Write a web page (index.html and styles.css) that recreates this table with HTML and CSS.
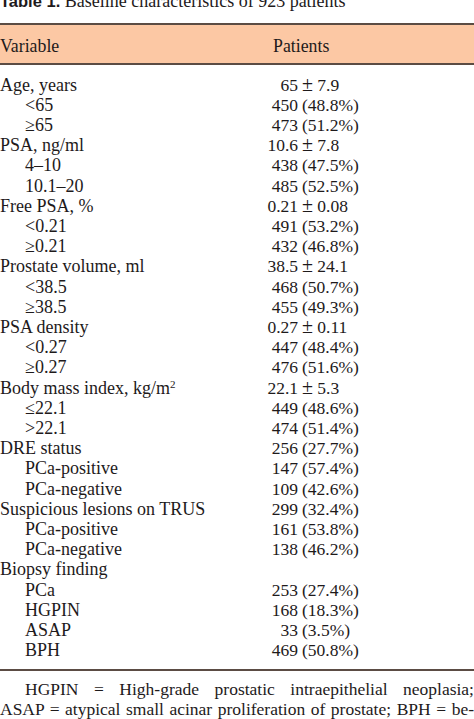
FILE: index.html
```html
<!DOCTYPE html>
<html>
<head>
<meta charset="utf-8">
<link rel="stylesheet" href="styles.css">
</head>
<body>
<div class="title"><span class="tlabel">Table 1.</span> Baseline characteristics of 923 patients</div>
<div class="table">
  <div class="head">
    <div>Variable</div>
    <div>Patients</div>
  </div>
  <div class="body">
    <div class="row"><div class="lab">Age, years</div><div class="a">65</div><div class="b pm"><span class="pmg">±</span> 7.9</div></div>
    <div class="row"><div class="lab sub">&lt;65</div><div class="a">450</div><div class="b">(48.8%)</div></div>
    <div class="row"><div class="lab sub">≥65</div><div class="a">473</div><div class="b">(51.2%)</div></div>
    <div class="row"><div class="lab">PSA, ng/ml</div><div class="a">10.6</div><div class="b pm"><span class="pmg">±</span> 7.8</div></div>
    <div class="row"><div class="lab sub">4–10</div><div class="a">438</div><div class="b">(47.5%)</div></div>
    <div class="row"><div class="lab sub">10.1–20</div><div class="a">485</div><div class="b">(52.5%)</div></div>
    <div class="row"><div class="lab">Free PSA, %</div><div class="a">0.21</div><div class="b pm"><span class="pmg">±</span> 0.08</div></div>
    <div class="row"><div class="lab sub">&lt;0.21</div><div class="a">491</div><div class="b">(53.2%)</div></div>
    <div class="row"><div class="lab sub">≥0.21</div><div class="a">432</div><div class="b">(46.8%)</div></div>
    <div class="row"><div class="lab">Prostate volume, ml</div><div class="a">38.5</div><div class="b pm"><span class="pmg">±</span> 24.1</div></div>
    <div class="row"><div class="lab sub">&lt;38.5</div><div class="a">468</div><div class="b">(50.7%)</div></div>
    <div class="row"><div class="lab sub">≥38.5</div><div class="a">455</div><div class="b">(49.3%)</div></div>
    <div class="row"><div class="lab">PSA density</div><div class="a">0.27</div><div class="b pm"><span class="pmg">±</span> 0.11</div></div>
    <div class="row"><div class="lab sub">&lt;0.27</div><div class="a">447</div><div class="b">(48.4%)</div></div>
    <div class="row"><div class="lab sub">≥0.27</div><div class="a">476</div><div class="b">(51.6%)</div></div>
    <div class="row"><div class="lab">Body mass index, kg/m<span class="sup">2</span></div><div class="a">22.1</div><div class="b pm"><span class="pmg">±</span> 5.3</div></div>
    <div class="row"><div class="lab sub">≤22.1</div><div class="a">449</div><div class="b">(48.6%)</div></div>
    <div class="row"><div class="lab sub">&gt;22.1</div><div class="a">474</div><div class="b">(51.4%)</div></div>
    <div class="row"><div class="lab">DRE status</div><div class="a">256</div><div class="b">(27.7%)</div></div>
    <div class="row"><div class="lab sub">PCa-positive</div><div class="a">147</div><div class="b">(57.4%)</div></div>
    <div class="row"><div class="lab sub">PCa-negative</div><div class="a">109</div><div class="b">(42.6%)</div></div>
    <div class="row"><div class="lab">Suspicious lesions on TRUS</div><div class="a">299</div><div class="b">(32.4%)</div></div>
    <div class="row"><div class="lab sub">PCa-positive</div><div class="a">161</div><div class="b">(53.8%)</div></div>
    <div class="row"><div class="lab sub">PCa-negative</div><div class="a">138</div><div class="b">(46.2%)</div></div>
    <div class="row"><div class="lab">Biopsy finding</div><div class="a"></div><div class="b"></div></div>
    <div class="row"><div class="lab sub">PCa</div><div class="a">253</div><div class="b">(27.4%)</div></div>
    <div class="row"><div class="lab sub">HGPIN</div><div class="a">168</div><div class="b">(18.3%)</div></div>
    <div class="row"><div class="lab sub">ASAP</div><div class="a">33</div><div class="b">(3.5%)</div></div>
    <div class="row"><div class="lab sub">BPH</div><div class="a">469</div><div class="b">(50.8%)</div></div>
  </div>
</div>
<div class="note">
  <div class="line first">HGPIN = High-grade prostatic intraepithelial neoplasia;</div>
  <div class="line">ASAP = atypical small acinar proliferation of prostate; BPH = be-</div>
  <div class="line">nign prostatic hyperplasia.</div>
</div>
</body>
</html>
```

FILE: styles.css
```css
html, body {
  margin: 0;
  padding: 0;
  background: #ffffff;
}
body {
  width: 474px;
  overflow: hidden;
  font-family: "Liberation Serif", "Times New Roman", serif;
  font-size: 17.5px;
  color: #1e1a1b;
}
.title {
  margin-top: -9px;
  height: 20px;
  line-height: 20px;
  font-size: 18px;
  white-space: nowrap;
}
.tlabel {
  font-family: "Liberation Sans", Arial, sans-serif;
  font-weight: bold;
  font-size: 16.5px;
}
.table {
  margin-top: 12px;
  border-top: 2px solid #5b4c44;
  border-bottom: 2px solid #5b4c44;
}
.head {
  display: grid;
  grid-template-columns: 273px 1fr;
  background: #fcc8a4;
  height: 39.5px;
  box-sizing: border-box;
  padding-top: 11px;
  line-height: 20.2px;
  font-size: 17.8px;
  border-bottom: 2px solid #5b4c44;
}
.body {
  padding-top: 10px;
  padding-bottom: 9px;
}
.row {
  display: grid;
  grid-template-columns: 240px 58px 1fr;
  height: 20.21px;
  line-height: 20.21px;
  white-space: nowrap;
}
.lab {
  font-size: 18px;
}
.lab.sub {
  padding-left: 25px;
}
.a {
  text-align: right;
}
.b {
  padding-left: 4px;
}
.b.pm {
  padding-left: 4px;
}
.pmg {
  font-size: 20px;
  line-height: 0;
}
.sup {
  font-size: 11px;
  line-height: 0;
  vertical-align: 0.55em;
}
.note {
  margin-top: 9px;
  line-height: 19.5px;
}
.line {
  text-align: justify;
  text-align-last: justify;
  white-space: nowrap;
}
.line.first {
  text-indent: 25px;
}
.line:last-child {
  text-align-last: left;
}
```
